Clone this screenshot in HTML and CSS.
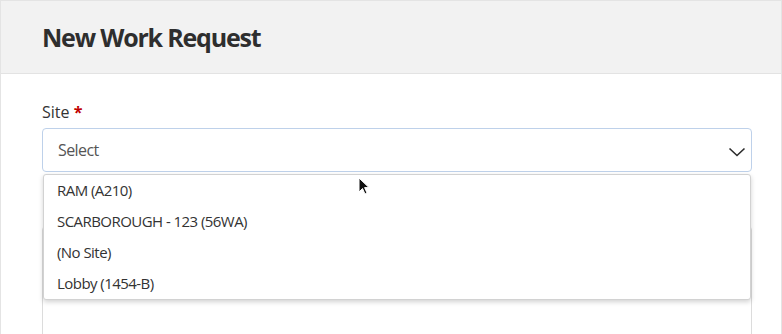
FILE: index.html
```html
<!DOCTYPE html>
<html lang="en">
<head>
    <meta charset="UTF-8">
    <meta name="viewport" content="width=device-width, initial-scale=1.0">
    <title>New Work Request</title>
    <link rel="stylesheet" href="styles.css">
</head>
<body>
    <div class="panel">
        <div class="panel-header">
            <h1 class="panel-title">New Work Request</h1>
        </div>

        <div class="panel-body">
            <label class="field-label">Site <span class="required">*</span></label>
            <div class="select-wrap">
                <div class="select-box">
                    <span class="select-placeholder">Select</span>
                    <svg class="chevron" width="18" height="10" viewBox="0 0 18 10">
                        <path d="M1.5 1.5 L9 8.5 L16.5 1.5" fill="none" stroke="#2b2b2b" stroke-width="1.6"/>
                    </svg>
                </div>
                <ul class="dropdown">
                    <li>RAM (A210)</li>
                    <li>SCARBOROUGH - 123 (56WA)</li>
                    <li>(No Site)</li>
                    <li>Lobby (1454-B)</li>
                </ul>
            </div>
            <div class="text-area"></div>
        </div>

        <svg class="cursor" width="14" height="20" viewBox="0 0 14 20">
            <path d="M1 1 L1 15 L4.5 11.5 L7 17 L9 16 L6.6 10.6 L11 10.6 Z" fill="#111" stroke="#fff" stroke-width="1"/>
        </svg>
    </div>
</body>
</html>
```

FILE: styles.css
```css
body {
    margin: 0;
    padding: 0;
    font-family: 'Open Sans', 'Noto Sans', sans-serif;
    color: #333333;
    background-color: #ffffff;
}

.panel {
    position: relative;
    height: 334px;
    border: 1px solid #e4e4e4;
    border-bottom: none;
    box-sizing: border-box;
    overflow: hidden;
}

.panel-header {
    height: 72px;
    background-color: #f2f2f2;
    border-bottom: 1px solid #e3e3e3;
    display: flex;
    align-items: center;
    padding-left: 41px;
}

.panel-title {
    margin: 0;
    font-size: 25px;
    font-weight: 700;
    letter-spacing: -1.2px;
    color: #2e2e2e;
}

.panel-body {
    padding: 27px 29px 0 41px;
}

.field-label {
    display: block;
    font-size: 16px;
    line-height: 22px;
    color: #333333;
    margin-bottom: 5px;
}

.required {
    color: #c00000;
    font-weight: 700;
}

.select-wrap {
    position: relative;
}

.select-box {
    height: 44px;
    border: 1px solid #bed1ea;
    border-radius: 4px;
    box-sizing: border-box;
    display: flex;
    align-items: center;
    justify-content: space-between;
    padding: 0 5px 0 15px;
}

.select-placeholder {
    font-size: 16px;
    letter-spacing: -0.6px;
    color: #555555;
}

.chevron {
    margin-top: 3px;
}

.dropdown {
    position: absolute;
    top: 46px;
    left: 1px;
    right: 1px;
    margin: 0;
    padding: 0;
    list-style: none;
    background-color: #ffffff;
    border: 1px solid #d2d2d2;
    border-radius: 3px;
    box-shadow: 0 2px 5px rgba(0, 0, 0, 0.18);
    z-index: 10;
}

.dropdown li {
    height: 31px;
    line-height: 31px;
    padding-left: 13px;
    font-size: 15px;
    letter-spacing: -0.55px;
    color: #333333;
}

.text-area {
    margin-top: 54px;
    height: 140px;
    border: 1px solid #dcdcdc;
    border-radius: 4px;
}

.cursor {
    position: absolute;
    left: 357px;
    top: 176px;
    z-index: 20;
}
```
